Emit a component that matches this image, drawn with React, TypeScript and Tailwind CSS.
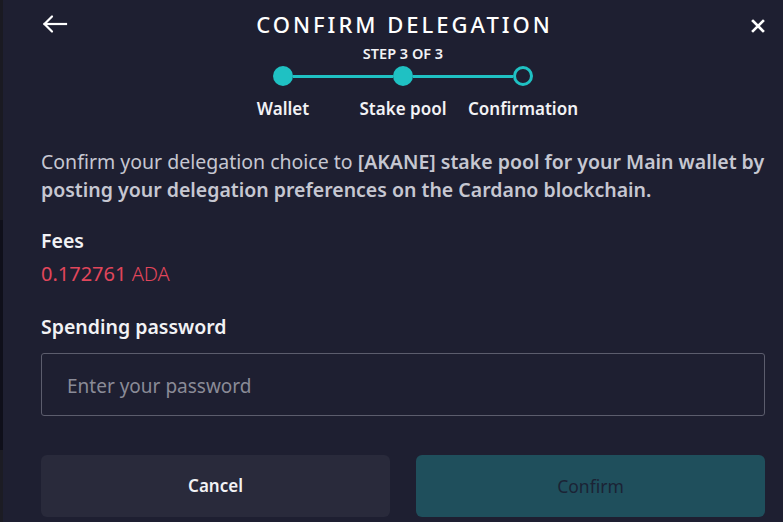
import React from 'react';

const steps = ['Wallet', 'Stake pool', 'Confirmation'];

function Stepper() {
    return (
        <div className="flex flex-col items-center">
            <div className="flex items-center">
                <span className="w-[20px] h-[20px] rounded-full bg-[#1fc1c3]" />
                <span className="w-[100px] h-[3px] bg-[#1fc1c3]" />
                <span className="w-[20px] h-[20px] rounded-full bg-[#1fc1c3]" />
                <span className="w-[100px] h-[3px] bg-[#1fc1c3]" />
                <span className="w-[20px] h-[20px] rounded-full border-[3px] border-[#1fc1c3]" />
            </div>
            <div className="flex mt-[11px]">
                {steps.map(s => (
                    <span key={s} className="w-[120px] text-center text-[17px] leading-[24px] font-semibold text-[#f2f2f5] whitespace-nowrap">
                        {s}
                    </span>
                ))}
            </div>
        </div>
    );
}

export default function App() {
    return (
        <div className="w-[783px] h-[522px] overflow-hidden flex bg-[#1e1f31]" style={{ fontFamily: '"Noto Sans", "Open Sans", sans-serif' }}>
            {/* bit of the page behind the dialog */}
            <div className="w-[3px] shrink-0 flex flex-col bg-[#17171f]">
                <div className="h-[140px] bg-[#1a1a22]" />
                <div className="h-[80px] bg-[#181820]" />
                <div className="h-[230px] bg-[#0f0f1a]" />
                <div className="flex-1 bg-[#1c1c24]" />
            </div>

            <div className="w-[800px] shrink-0 px-[38px] pt-[8px]">
                <div className="grid grid-cols-[1fr_auto_1fr] items-start">
                    <button className="justify-self-start text-white mt-[6px] ml-[1px]">
                        <svg width="26" height="20" viewBox="0 0 26 20" fill="none" stroke="white" strokeWidth="2.2" strokeLinecap="square">
                            <path d="M2.5 10 H24" />
                            <path d="M10 2.5 L2.5 10 L10 17.5" strokeLinecap="round" strokeLinejoin="round" />
                        </svg>
                    </button>
                    <div className="flex flex-col items-center">
                        <h1 className="text-[22px] leading-[32px] font-medium tracking-[3px] text-white pl-[3px]">CONFIRM DELEGATION</h1>
                        <p className="text-[14.5px] leading-[18px] font-semibold text-[#f2f2f5] mt-[4px] mb-[4px]">STEP 3 OF 3</p>
                        <Stepper />
                    </div>
                    <button className="justify-self-end mt-[11px]">
                        <svg width="14" height="14" viewBox="0 0 14 14" stroke="white" strokeWidth="2.6" strokeLinecap="square">
                            <path d="M2 2 L12 12 M12 2 L2 12" />
                        </svg>
                    </button>
                </div>

                <p className="mt-[27px] text-[19.5px] leading-[28px] text-[#c6c7d1]">
                    Confirm your delegation choice to <b className="font-semibold">[AKANE] stake pool for your Main wallet by posting your delegation preferences on the Cardano blockchain.</b>
                </p>

                <p className="mt-[23px] text-[19.5px] leading-[28px] font-semibold text-[#f2f2f5]">Fees</p>
                <p className="mt-[5px] text-[20px] leading-[28px] text-[#e1465b]">
                    0.172761 <span className="font-light">ADA</span>
                </p>

                <p className="mt-[25px] text-[19.5px] leading-[28px] font-semibold text-[#f2f2f5]">Spending password</p>
                <input
                    type="password"
                    placeholder="Enter your password"
                    className="block mt-[12px] w-full h-[63px] rounded-[3px] border border-[#5c5d6d] bg-transparent px-[25px] pt-[3px] text-[19px] text-white placeholder:text-[#8a8b97] outline-none"
                />

                <div className="mt-[39px] grid grid-cols-2 gap-[26px]">
                    <button className="h-[62px] rounded-[6px] bg-[#292a3b] text-[17px] font-semibold text-[#f2f2f5]">Cancel</button>
                    <button className="h-[62px] rounded-[6px] bg-[#1f4f5c] text-[17.5px] text-[#1b2335]">Confirm</button>
                </div>
            </div>
        </div>
    );
}
